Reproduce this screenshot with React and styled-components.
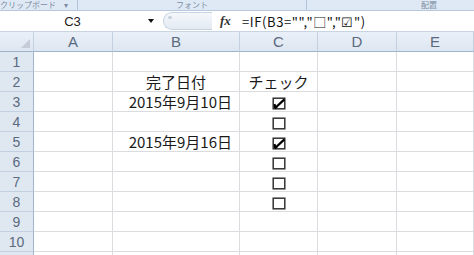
import React from "react";
import styled, { createGlobalStyle } from "styled-components";

const Global = createGlobalStyle`
  html, body { margin: 0; padding: 0; background: #fff; }
  body { width: 474px; height: 255px; overflow: hidden; font-family: "Noto Sans CJK JP", "Liberation Sans", sans-serif; }
`;

const Window = styled.div`
  width: 474px;
  height: 255px;
  overflow: hidden;
  display: flex;
  flex-direction: column;
`;

const RibbonStrip = styled.div`
  height: 10px;
  flex: none;
  display: flex;
  background: #dfe9f5;
  border-bottom: 1px solid #b7c8dc;
  overflow: hidden;
`;

const RibbonGroup = styled.div`
  width: ${(p) => (p.$w ? `${p.$w}px` : "auto")};
  flex: ${(p) => (p.$w ? "none" : "1")};
  display: flex;
  align-items: center;
  justify-content: ${(p) => p.$align || "center"};
  padding-right: ${(p) => p.$pr || 0}px;
  border-right: ${(p) => (p.$last ? "none" : "1px solid #b2c3d8")};
  font-size: 8px;
  line-height: 10px;
  color: #7c8ca3;
  box-sizing: border-box;
`;

const GroupLabel = styled.span`
  white-space: nowrap;
  display: inline-flex;
  gap: 8px;
`;

const FormulaBar = styled.div`
  height: 20px;
  flex: none;
  display: flex;
  align-items: center;
  background: #fff;
  border-bottom: 1px solid #c9d4e2;
`;

const NameBox = styled.div`
  width: 160px;
  flex: none;
  display: flex;
  align-items: center;
  height: 100%;
  font-family: "Liberation Sans", sans-serif;
  font-size: 13px;
  color: #222;
`;

const NameText = styled.span`
  width: 145px;
  text-align: center;
`;

const DropArrow = styled.span`
  width: 0;
  height: 0;
  border-left: 3px solid transparent;
  border-right: 3px solid transparent;
  border-top: 4px solid #111;
  margin-left: 3px;
`;

const Splitter = styled.div`
  width: 48px;
  height: 16px;
  flex: none;
  margin-left: 3px;
  border: 1px solid #c8d3e0;
  border-right: none;
  border-radius: 9px 0 0 9px;
  background: linear-gradient(#f4f7fb, #e3eaf3);
  position: relative;
  &::before {
    content: "";
    position: absolute;
    left: 4px;
    top: 3px;
    width: 4px;
    height: 3px;
    border-radius: 2px;
    background: #c9d2dc;
  }
`;

const Fx = styled.span`
  width: 14px;
  margin-left: 8px;
  font-family: "Liberation Serif", serif;
  font-style: italic;
  font-weight: bold;
  font-size: 13px;
  color: #333;
`;

const FormulaText = styled.span`
  margin-left: 8px;
  font-size: 13px;
  color: #111;
  white-space: nowrap;
  letter-spacing: 0.6px;
`;

const Sheet = styled.div`
  display: grid;
  grid-template-columns: 34px 79px 127px 78px 79px 1fr;
  grid-auto-rows: 20px;
`;

const ColHead = styled.div`
  background: linear-gradient(#eaf0f8, #dde6f1);
  border-right: 1px solid #c3d0e0;
  border-bottom: 1px solid #9fb4cc;
  display: flex;
  align-items: center;
  justify-content: center;
  font-family: "Liberation Sans", sans-serif;
  font-size: 15px;
  color: #5b6a7e;
  box-sizing: border-box;
  position: relative;
`;

const Corner = styled(ColHead)`
  &::after {
    content: "";
    position: absolute;
    right: 3px;
    bottom: 3px;
    width: 0;
    height: 0;
    border-left: 9px solid transparent;
    border-bottom: 9px solid #c3ccd7;
  }
`;

const RowHead = styled.div`
  background: #dfe7f1;
  border-right: 1px solid #9fb4cc;
  border-bottom: 1px solid #c3d0e0;
  display: flex;
  align-items: center;
  justify-content: center;
  font-family: "Liberation Sans", sans-serif;
  font-size: 14px;
  color: #5b6a7e;
  box-sizing: border-box;
`;

const Cell = styled.div`
  border-right: 1px solid #dadcdf;
  border-bottom: 1px solid #dadcdf;
  box-sizing: border-box;
  display: flex;
  align-items: center;
  justify-content: ${(p) => p.$align || "flex-start"};
  padding: 0 ${(p) => (p.$align === "flex-end" ? 7 : 0)}px 0 0;
  font-size: 15px;
  color: #1a1a1a;
  white-space: nowrap;
`;

const BoxIcon = styled.svg`
  display: block;
  width: 14px;
  height: 13px;
  margin-top: 3px;
`;

function CheckGlyph({ checked }) {
  return (
    <BoxIcon viewBox="0 0 14 13" role="img" aria-label={checked ? "☑" : "□"}>
      <rect x="1.2" y="1.2" width="11.6" height="10.6" fill="none" stroke="#333" strokeWidth="1.5" />
      {checked && (
        <>
          <path d="M2 7 L2 11 L5.6 11 Z" fill="#000" />
          <path d="M2.4 7.2 L3.6 10.6 L12.4 2.4" fill="none" stroke="#000" strokeWidth="2.2" strokeLinejoin="miter" />
        </>
      )}
    </BoxIcon>
  );
}

const cols = ["A", "B", "C", "D", "E"];

const data = {
  2: { B: { t: "完了日付", a: "center" }, C: { t: "チェック", a: "center" } },
  3: { B: { t: "2015年9月10日", a: "flex-end" }, C: { box: true } },
  4: { C: { box: false } },
  5: { B: { t: "2015年9月16日", a: "flex-end" }, C: { box: true } },
  6: { C: { box: false } },
  7: { C: { box: false } },
  8: { C: { box: false } },
};

export default function App() {
  const rows = Array.from({ length: 11 }, (_, i) => i + 1);
  return (
    <Window>
      <Global />
      <RibbonStrip>
        <RibbonGroup $w={78} $align="flex-start">
          <GroupLabel>クリップボード<span>▾</span></GroupLabel>
        </RibbonGroup>
        <RibbonGroup $w={229}>
          <GroupLabel>フォント</GroupLabel>
        </RibbonGroup>
        <RibbonGroup $last $align="flex-end" $pr={37}>
          <GroupLabel>配置</GroupLabel>
        </RibbonGroup>
      </RibbonStrip>
      <FormulaBar>
        <NameBox>
          <NameText>C3</NameText>
          <DropArrow />
        </NameBox>
        <Splitter />
        <Fx>fx</Fx>
        <FormulaText>=IF(B3="","□","☑")</FormulaText>
      </FormulaBar>
      <Sheet>
        <Corner />
        {cols.map((c) => (
          <ColHead key={c}>{c}</ColHead>
        ))}
        {rows.map((r) => (
          <React.Fragment key={r}>
            <RowHead>{r <= 10 ? r : ""}</RowHead>
            {cols.map((c) => {
              const d = data[r] && data[r][c];
              if (!d) return <Cell key={c} />;
              if (d.box !== undefined)
                return (
                  <Cell key={c} $align="center">
                    <CheckGlyph checked={d.box} />
                  </Cell>
                );
              return (
                <Cell key={c} $align={d.a}>
                  {d.t}
                </Cell>
              );
            })}
          </React.Fragment>
        ))}
      </Sheet>
    </Window>
  );
}
